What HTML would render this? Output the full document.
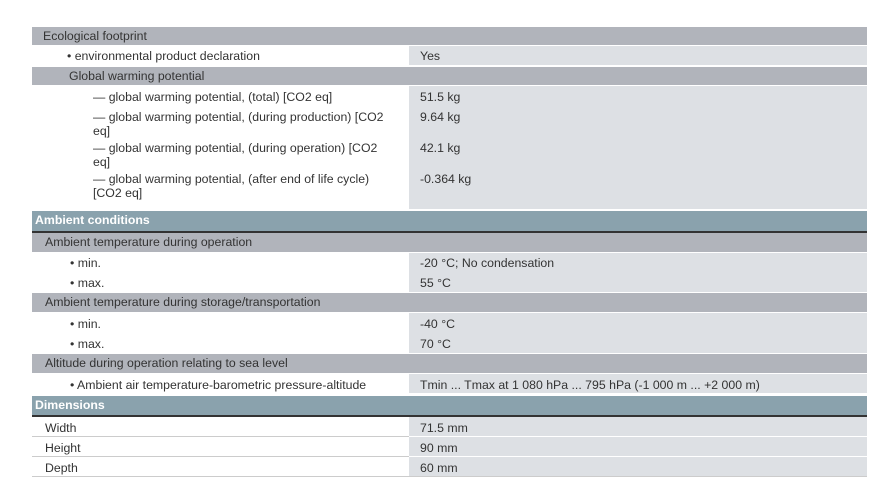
<!DOCTYPE html>
<html><head><style>
body{margin:0;width:890px;height:500px;background:#fff;font-family:"Liberation Sans",sans-serif;font-size:12.3px;color:#333;position:relative;overflow:hidden}
.r{position:absolute;left:32px;width:835px}
.g{background:#b1b4bb}
.s{background:#8aa2ad;border-bottom:2px solid #333;box-sizing:border-box}
.v{position:absolute;left:409px;width:458px;background:#dde0e4;box-sizing:border-box}
.t{position:absolute;line-height:13px;white-space:nowrap}
.w{white-space:normal;width:300px;line-height:14px}
.line{position:absolute;left:32px;width:377px;height:1px;background:#ccc}
.h{color:#fff;font-weight:bold}
</style></head><body>
<div class="r g" style="top:27px;height:18px"></div><div class="t" style="left:43px;top:30px">Ecological footprint</div>
<div class="v" style="top:46px;height:19px"></div><div class="t" style="left:420px;top:50px">Yes</div>
<div class="t" style="left:67px;top:50px">• environmental product declaration</div>
<div class="r g" style="top:67px;height:18px"></div><div class="t" style="left:69px;top:70px">Global warming potential</div>
<div class="v" style="top:86px;height:123px"></div>
<div class="t" style="left:93px;top:91px">— global warming potential, (total) [CO2 eq]</div><div class="t" style="left:420px;top:91px">51.5 kg</div>
<div class="t w" style="left:93px;top:110px">— global warming potential, (during production) [CO2 eq]</div><div class="t" style="left:420px;top:111px">9.64 kg</div>
<div class="t w" style="left:93px;top:141px">— global warming potential, (during operation) [CO2 eq]</div><div class="t" style="left:420px;top:142px">42.1 kg</div>
<div class="t w" style="left:93px;top:172px">— global warming potential, (after end of life cycle) [CO2 eq]</div><div class="t" style="left:420px;top:173px">-0.364 kg</div>
<div class="r s" style="top:211px;height:22px"></div>
<div class="t h" style="left:35px;top:214px">Ambient conditions</div>
<div class="r g" style="top:233px;height:19px"></div><div class="t" style="left:45px;top:236px">Ambient temperature during operation</div>
<div class="v" style="top:253px;height:39px"></div>
<div class="t" style="left:70px;top:257px">• min.</div><div class="t" style="left:420px;top:257px">-20 °C; No condensation</div>
<div class="t" style="left:70px;top:277px">• max.</div><div class="t" style="left:420px;top:277px">55 °C</div>
<div class="r g" style="top:293px;height:19px"></div><div class="t" style="left:45px;top:296px">Ambient temperature during storage/transportation</div>
<div class="v" style="top:313px;height:40px"></div>
<div class="t" style="left:70px;top:318px">• min.</div><div class="t" style="left:420px;top:318px">-40 °C</div>
<div class="t" style="left:70px;top:338px">• max.</div><div class="t" style="left:420px;top:338px">70 °C</div>
<div class="r g" style="top:354px;height:19px"></div><div class="t" style="left:45px;top:357px">Altitude during operation relating to sea level</div>
<div class="v" style="top:374px;height:19px"></div>
<div class="t" style="left:70px;top:379px">• Ambient air temperature-barometric pressure-altitude</div><div class="t" style="left:420px;top:379px">Tmin ... Tmax at 1 080 hPa ... 795 hPa (-1 000 m ... +2 000 m)</div>
<div class="r s" style="top:396px;height:21px"></div>
<div class="t h" style="left:35px;top:399px">Dimensions</div>
<div class="v" style="top:417px;height:19px"></div><div class="line" style="top:436px"></div>
<div class="v" style="top:437px;height:19px"></div><div class="line" style="top:456px"></div>
<div class="v" style="top:457px;height:19px"></div><div class="r" style="top:476px;height:1px;background:#ccc"></div>
<div class="t" style="left:45px;top:422px">Width</div><div class="t" style="left:420px;top:422px">71.5 mm</div>
<div class="t" style="left:45px;top:442px">Height</div><div class="t" style="left:420px;top:442px">90 mm</div>
<div class="t" style="left:45px;top:462px">Depth</div><div class="t" style="left:420px;top:462px">60 mm</div>
</body></html>
